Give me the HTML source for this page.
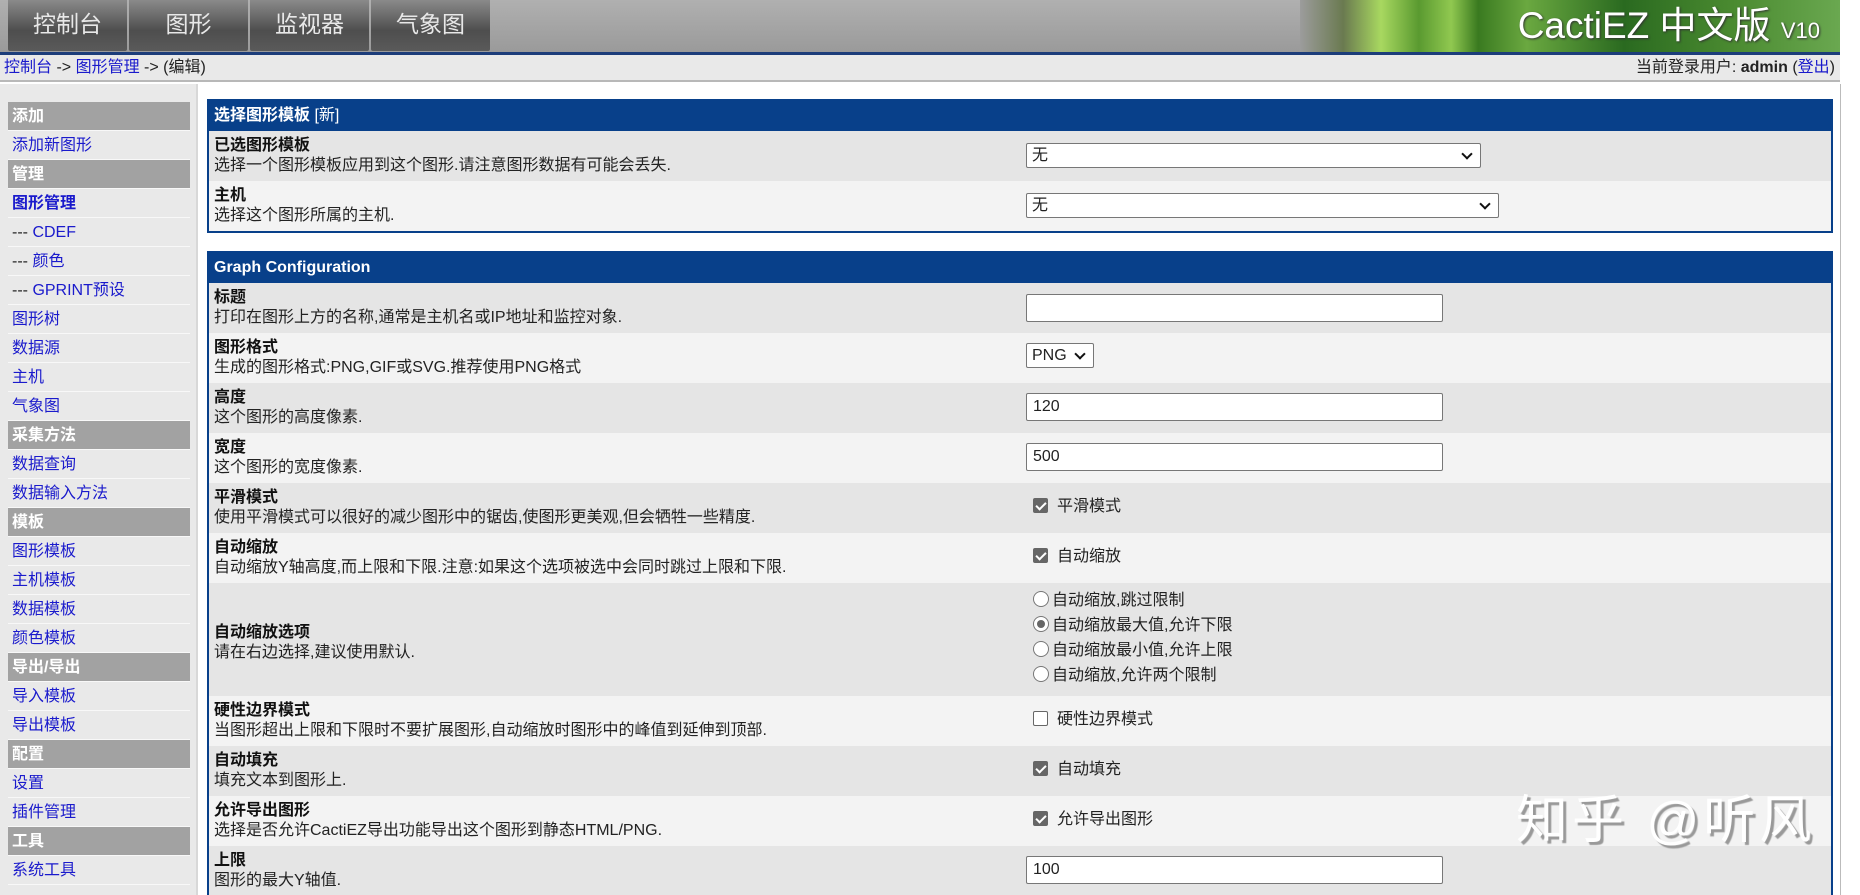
<!DOCTYPE html>
<html style="width:1860px;height:895px;overflow:hidden"><head><meta charset="utf-8"><style>
*{margin:0;padding:0;box-sizing:border-box}
body{width:1860px;height:895px;overflow:hidden;background:#fff;font-family:"Liberation Sans","Noto Sans CJK SC",sans-serif;font-size:16px;color:#222;position:relative}
#hdr{position:absolute;left:0;top:0;width:1840px;height:52px;background:linear-gradient(#b0b0b0,#9a9a9a)}
.tab{position:absolute;top:0;height:51px;width:119px;background:linear-gradient(#8a8a8a,#4e4e4e 60%,#5a5a5a);color:#e8e8e8;font-size:23px;text-align:center;line-height:48px;border-radius:0 0 2px 2px}
#logo{position:absolute;left:1300px;top:0;width:540px;height:52px;background:linear-gradient(90deg,#9c9c9c 0%,#6a7a50 8%,#a8d860 15%,#5a9a30 22%,#90c850 28%,#3a7a20 33%,#6aa840 42%,#2a6a20 60%,#4a8a30 80%,#6aa850 100%)}
#logo span{position:absolute;right:20px;top:3px;color:#fff;font-size:37px;line-height:46px;text-shadow:1px 1px 2px #333;white-space:nowrap}
#logo small{font-size:22px}
#bl{position:absolute;left:0;top:52px;width:1840px;height:3px;background:#1c3d7a}
#bc{position:absolute;left:0;top:55px;width:1840px;height:27px;background:#e9e9e9;line-height:26px;padding-left:4px;border-bottom:2px solid #b8b8b8}
#bc a,a{color:#1a1acc;text-decoration:none}
#user{position:absolute;right:5px;top:0}
#side{position:absolute;left:0;top:84px;width:198px;height:811px;background:#e9e9e9;border-right:2px solid #d8d8d8}
.si{position:absolute;left:8px;width:182px;height:29px;line-height:29px;padding-left:4px;color:#1a1acc;border-bottom:1px solid #f8f8f8}
.sh{background:#a2a2a2;color:#fff;font-weight:bold;padding-left:4px}
.tb{position:absolute;left:207px;width:1626px;border:2px solid #08408a;background:#f3f3f3;overflow:hidden}
.th{background:#08408a;color:#fff;font-weight:bold;height:30px;line-height:30px;padding-left:5px}
.th span{font-weight:normal}
.row{position:relative;height:50px;padding:5px 0 0 5px;line-height:20px}
.row b{display:block;color:#111}
.a{background:#e5e5e5}.b{background:#f3f3f3}
.sel{position:absolute;left:817px;height:25px;background:#fff;border:1px solid #777;border-radius:2px;padding-left:5px;line-height:23px}
.sel:after{content:"";position:absolute;right:9px;top:6px;width:6px;height:6px;border-right:2px solid #111;border-bottom:2px solid #111;transform:rotate(45deg)}
.inp{position:absolute;left:817px;top:10px;width:417px;height:28px;background:#fff;border:1px solid #777;border-radius:2px;padding-left:6px;line-height:26px}
.cb{position:absolute;left:824px;top:14px;line-height:20px}
.cb i{display:inline-block;width:15px;height:15px;background:#666;border-radius:2px;vertical-align:-2px;margin-right:9px;position:relative}
.cb i:after{content:"";position:absolute;left:5px;top:2px;width:4px;height:8px;border-right:2px solid #fff;border-bottom:2px solid #fff;transform:rotate(45deg)}
.cb i.e{background:#fff;border:1px solid #666}.cb i.e:after{display:none}
.rd{position:absolute;left:824px;line-height:25px}
.rd i{display:inline-block;width:16px;height:16px;border:1px solid #777;border-radius:50%;background:#fff;vertical-align:-2px;margin-right:3px;position:relative}
.rd i.on:after{content:"";position:absolute;left:3px;top:3px;width:8px;height:8px;border-radius:50%;background:#666}
#wm{position:absolute;left:1516px;top:778px;font-size:52px;color:#fff;text-shadow:3px 3px 1px #999;letter-spacing:4px}
#rb{position:absolute;left:1840px;top:84px;width:1px;height:811px;background:#bbb}
</style></head><body>
<div id="hdr">
<div class="tab" style="left:8px">控制台</div>
<div class="tab" style="left:129px">图形</div>
<div class="tab" style="left:250px">监视器</div>
<div class="tab" style="left:371px">气象图</div>
<div id="logo"><span>CactiEZ 中文版 <small>V10</small></span></div>
</div>
<div id="bl"></div>
<div id="bc"><a>控制台</a> -&gt; <a>图形管理</a> -&gt; (编辑)<div id="user">当前登录用户: <b>admin</b> (<a>登出</a>)</div></div>
<div id="side">
<div class="si sh" style="top:18px">添加</div>
<div class="si" style="top:47px">添加新图形</div>
<div class="si sh" style="top:76px">管理</div>
<div class="si" style="top:105px;font-weight:bold">图形管理</div>
<div class="si" style="top:134px"><span style="color:#222">--- </span>CDEF</div>
<div class="si" style="top:163px"><span style="color:#222">--- </span>颜色</div>
<div class="si" style="top:192px"><span style="color:#222">--- </span>GPRINT预设</div>
<div class="si" style="top:221px">图形树</div>
<div class="si" style="top:250px">数据源</div>
<div class="si" style="top:279px">主机</div>
<div class="si" style="top:308px">气象图</div>
<div class="si sh" style="top:337px">采集方法</div>
<div class="si" style="top:366px">数据查询</div>
<div class="si" style="top:395px">数据输入方法</div>
<div class="si sh" style="top:424px">模板</div>
<div class="si" style="top:453px">图形模板</div>
<div class="si" style="top:482px">主机模板</div>
<div class="si" style="top:511px">数据模板</div>
<div class="si" style="top:540px">颜色模板</div>
<div class="si sh" style="top:569px">导出/导出</div>
<div class="si" style="top:598px">导入模板</div>
<div class="si" style="top:627px">导出模板</div>
<div class="si sh" style="top:656px">配置</div>
<div class="si" style="top:685px">设置</div>
<div class="si" style="top:714px">插件管理</div>
<div class="si sh" style="top:743px">工具</div>
<div class="si" style="top:772px">系统工具</div>
</div>
<div id="rb"></div>
<div class="tb" style="top:99px">
<div class="th">选择图形模板 <span>[新]</span></div>
<div class="row a"><b>已选图形模板</b>选择一个图形模板应用到这个图形.请注意图形数据有可能会丢失.<div class="sel" style="top:12px;width:455px">无</div></div>
<div class="row b"><b>主机</b>选择这个图形所属的主机.<div class="sel" style="top:12px;width:473px">无</div></div>
</div>
<div class="tb" style="top:251px;height:644px;border-bottom:none">
<div class="th">Graph Configuration</div>
<div class="row a"><b>标题</b>打印在图形上方的名称,通常是主机名或IP地址和监控对象.<div class="inp" style="top:11px"></div></div>
<div class="row b"><b>图形格式</b>生成的图形格式:PNG,GIF或SVG.推荐使用PNG格式<div class="sel" style="top:10px;width:68px">PNG</div></div>
<div class="row a"><b>高度</b>这个图形的高度像素.<div class="inp">120</div></div>
<div class="row b"><b>宽度</b>这个图形的宽度像素.<div class="inp">500</div></div>
<div class="row a"><b>平滑模式</b>使用平滑模式可以很好的减少图形中的锯齿,使图形更美观,但会牺牲一些精度.<div class="cb"><i></i>平滑模式</div></div>
<div class="row b"><b>自动缩放</b>自动缩放Y轴高度,而上限和下限.注意:如果这个选项被选中会同时跳过上限和下限.<div class="cb"><i></i>自动缩放</div></div>
<div class="row a" style="height:113px;padding-top:40px"><b>自动缩放选项</b>请在右边选择,建议使用默认.
<div class="rd" style="top:5px"><i></i>自动缩放,跳过限制</div>
<div class="rd" style="top:30px"><i class="on"></i>自动缩放最大值,允许下限</div>
<div class="rd" style="top:55px"><i></i>自动缩放最小值,允许上限</div>
<div class="rd" style="top:80px"><i></i>自动缩放,允许两个限制</div></div>
<div class="row b"><b>硬性边界模式</b>当图形超出上限和下限时不要扩展图形,自动缩放时图形中的峰值到延伸到顶部.<div class="cb"><i class="e"></i>硬性边界模式</div></div>
<div class="row a"><b>自动填充</b>填充文本到图形上.<div class="cb"><i></i>自动填充</div></div>
<div class="row b"><b>允许导出图形</b>选择是否允许CactiEZ导出功能导出这个图形到静态HTML/PNG.<div class="cb"><i></i>允许导出图形</div></div>
<div class="row a" style="height:60px"><b>上限</b>图形的最大Y轴值.<div class="inp">100</div></div>
</div>
<div id="wm">知乎 @听风</div>
</body></html>
